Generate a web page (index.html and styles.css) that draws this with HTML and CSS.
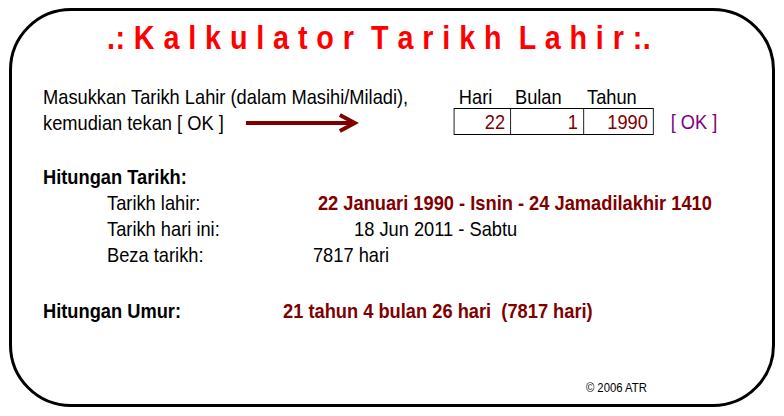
FILE: index.html
```html
<!DOCTYPE html>
<html>
<head>
<meta charset="utf-8">
<link rel="stylesheet" href="styles.css">
</head>
<body>
<div class="frame">
  <div class="content">
    <h1 class="title">.: K a l k u l a t o r&nbsp; T a r i k h&nbsp; L a h i r :.</h1>
    <div class="intro">
      <div class="line span2">Masukkan Tarikh Lahir (dalam Masihi/Miladi),</div>
      <div class="heads"><span class="h1">Hari</span><span class="h2">Bulan</span><span class="h3">Tahun</span></div>
      <div class="line">kemudian tekan [ OK ]</div>
      <div class="arrowcell">
        <svg class="arrow" width="131" height="22" viewBox="0 0 115 22" preserveAspectRatio="none"><path d="M0 11 H108" stroke="#800000" stroke-width="4" fill="none"/><path d="M95 3 L110 11 L95 19" stroke="#800000" stroke-width="4" fill="none"/></svg>
      </div>
      <div class="entry">
        <div class="cells"><span class="c1">22</span><span class="c2">1</span><span class="c3">1990</span></div>
        <span class="ok">[ OK ]</span>
      </div>
    </div>
    <div class="section">
      <div class="line bold">Hitungan Tarikh:</div>
      <div class="row"><span class="lbl">Tarikh lahir:</span><span class="val v1 bold red">22 Januari 1990 - Isnin - 24 Jamadilakhir 1410</span></div>
      <div class="row"><span class="lbl">Tarikh hari ini:</span><span class="val v2">18 Jun 2011 - Sabtu</span></div>
      <div class="row"><span class="lbl">Beza tarikh:</span><span class="val v3">7817 hari</span></div>
    </div>
    <div class="umur">
      <span class="bold ulbl">Hitungan Umur:</span><span class="bold red">21 tahun 4 bulan 26 hari&nbsp; (7817 hari)</span>
    </div>
    <div class="copy">© 2006 ATR</div>
  </div>
</div>
</body>
</html>
```
FILE: styles.css
```css
html, body { margin: 0; padding: 0; background: #fff; }
body { font-family: "Liberation Sans", Arial, sans-serif; font-size: 21px; color: #000; }
.frame {
  box-sizing: border-box;
  margin: 8px 0 0 9px;
  width: 766px;
  height: 399px;
  border: 3px solid #000;
  border-radius: 62px;
  padding: 7px 0 0 31px;
}
/* narrow face emulation: the whole content is condensed horizontally */
.content {
  width: 820px;
  transform: scaleX(0.87);
  transform-origin: 0 0;
}
.title {
  margin: 0 0 0 73.6px;
  font-size: 33px;
  line-height: 40px;
  font-weight: bold;
  color: #ff0000;
  letter-spacing: 0.5px;
  white-space: nowrap;
}
.line { line-height: 26px; white-space: nowrap; }
.intro {
  margin-top: 26px;
  display: grid;
  grid-template-columns: 233.3px 239.1px auto;
  align-items: start;
}
.span2 { grid-column: 1 / span 2; }
.heads { display: flex; line-height: 26px; }
.heads span { box-sizing: border-box; }
.h1 { width: 65.5px; padding-left: 5.6px; }
.h2 { width: 83.9px; padding-left: 4.6px; }
.h3 { width: 80.5px; padding-left: 3.5px; }
.arrowcell { height: 26px; }
.arrow { display: block; margin-top: 2px; }
.entry { display: flex; align-items: center; margin-top: -2px; }
.cells { display: flex; border: 1.15px solid #000; }
.cells span { box-sizing: border-box; text-align: right; padding-right: 5.7px; line-height: 25px; color: #800000; }
.c1 { width: 64.4px; border-right: 1.15px solid #000; }
.c2 { width: 83.9px; border-right: 1.15px solid #000; }
.c3 { width: 79.3px; }
.ok { color: #800080; margin-left: 19.5px; }
.section { margin-top: 28px; }
.row { display: flex; line-height: 26px; white-space: nowrap; padding-left: 73.6px; }
.lbl { width: 236px; }
.v1 { margin-left: 6.4px; }
.v2 { margin-left: 47.9px; }
.v3 { margin-left: 0.7px; }
.bold { font-weight: bold; }
.red { color: #800000; }
.umur { margin-top: 30px; line-height: 26px; display: flex; white-space: nowrap; }
.ulbl { width: 275.9px; }
.copy { margin: 57px 0 0 624px; font-size: 13px; line-height: 14px; }
```
